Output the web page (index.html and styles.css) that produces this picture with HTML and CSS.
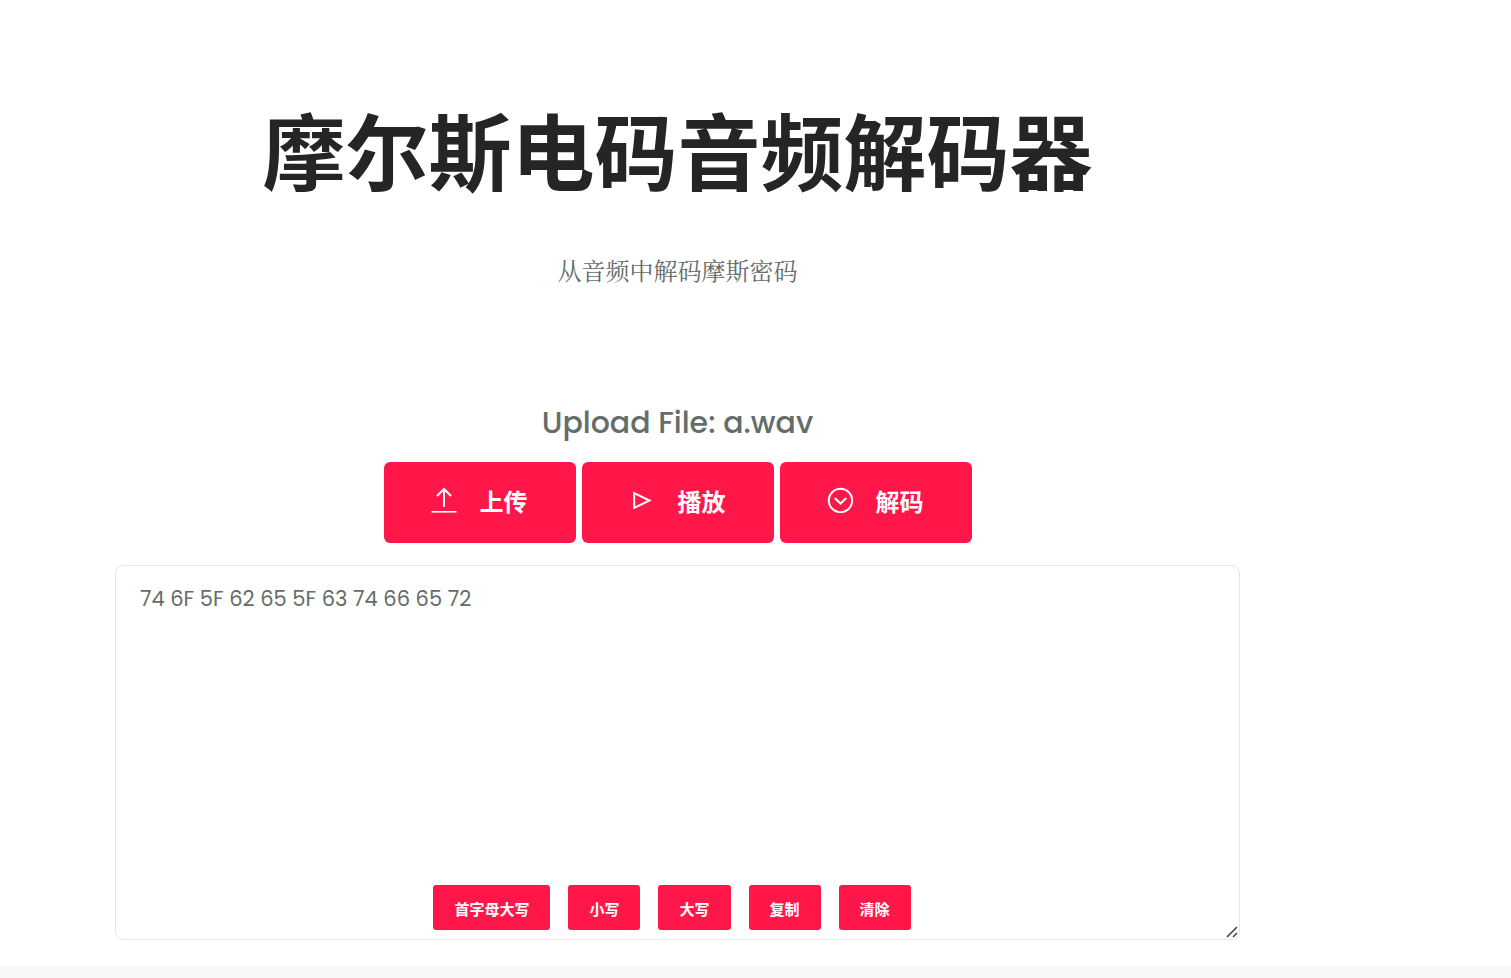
FILE: index.html
```html
<!DOCTYPE html>
<html lang="zh-CN">
<head>
<meta charset="utf-8">
<meta name="viewport" content="width=device-width, initial-scale=1">
<title>摩尔斯电码音频解码器</title>
<link rel="stylesheet" href="styles.css">
</head>
<body>
<main class="decoder">
  <h1 class="title">摩尔斯电码音频解码器</h1>
  <p class="subtitle">从音频中解码摩斯密码</p>
  <h2 class="file-name">Upload File: a.wav</h2>
  <div class="actions">
    <button class="action" type="button">
      <svg class="icon" viewBox="0 0 26 26" aria-hidden="true"><path d="M13 20V2M6 9l7-7 7 7"/><path d="M.5 24.8h25" stroke-width="1.6"/></svg>
      <span>上传</span>
    </button>
    <button class="action" type="button">
      <svg class="icon" viewBox="0 0 26 26" aria-hidden="true"><path d="M5.2 6v15L20.5 13.5z"/></svg>
      <span>播放</span>
    </button>
    <button class="action" type="button">
      <svg class="icon" viewBox="0 0 26 26" aria-hidden="true"><circle cx="13.5" cy="13.5" r="11.7"/><path d="M7.7 11l5.8 5.5 5.8-5.5"/></svg>
      <span>解码</span>
    </button>
  </div>
  <div class="result">
    <textarea class="output" aria-label="解码结果" spellcheck="false">74 6F 5F 62 65 5F 63 74 66 65 72</textarea>
    <svg class="grip" viewBox="0 0 12 12" aria-hidden="true"><path d="M1 11L11 1M7 11l4-4"/></svg>
    <div class="tools">
      <button class="tool" type="button">首字母大写</button>
      <button class="tool" type="button">小写</button>
      <button class="tool" type="button">大写</button>
      <button class="tool" type="button">复制</button>
      <button class="tool" type="button">清除</button>
    </div>
  </div>
</main>
<div class="next-section"></div>
</body>
</html>
```
FILE: styles.css
```css
* {
  box-sizing: border-box;
}

html,
body {
  min-height: 100vh;
}

body {
  display: flex;
  flex-direction: column;
  margin: 0;
  background: #fff;
  color: #636d69;
  font-family: Poppins, Inter, "Noto Sans CJK SC", sans-serif;
}

.decoder {
  display: flex;
  flex-direction: column;
  margin-left: 115px;
  margin-right: 271px;
  padding: 98px 0 26px;
  text-align: center;
}

.title {
  margin: 0;
  color: #252525;
  font: 700 83px/100px "Noto Sans CJK SC", sans-serif;
}

.subtitle {
  margin: 54px 0 0;
  font: 400 24px/36px "Noto Serif CJK SC", "Noto Sans CJK SC", serif;
}

.file-name {
  margin: 112px 0 0;
  font-size: 30px;
  font-weight: 500;
  line-height: 46px;
}

.actions {
  display: flex;
  justify-content: center;
  gap: 6px;
  margin-top: 16px;
}

.action {
  display: flex;
  align-items: center;
  gap: 23px;
  height: 81px;
  padding: 0 48px 4px 47px;
  border: 0;
  border-radius: 6px;
  background: #ff1749;
  color: #fff;
  font: 700 24px/36px "Noto Sans CJK SC", sans-serif;
}

.icon {
  width: 26px;
  height: 26px;
  margin-bottom: 2px;
  fill: none;
  stroke: currentColor;
  stroke-width: 2;
}

.result {
  position: relative;
  margin-top: 22px;
}

.output {
  display: block;
  width: 100%;
  height: 375px;
  padding: 17px 24px;
  border: 1px solid #e6e6e6;
  border-radius: 8px;
  outline: 0;
  background: #fff;
  color: #636d69;
  font: 400 21px/32px Poppins, Inter, sans-serif;
  resize: both;
}

.output::-webkit-resizer {
  background: transparent;
}

.grip {
  position: absolute;
  right: 2px;
  bottom: 2px;
  width: 12px;
  height: 12px;
  fill: none;
  stroke: #444;
  stroke-width: 1.6;
  pointer-events: none;
}

.tools {
  position: absolute;
  right: 11px;
  bottom: 10px;
  left: 0;
  display: flex;
  justify-content: center;
  gap: 18px;
  pointer-events: none;
}

.tool {
  height: 45px;
  padding: 2px 21px 0;
  border: 0;
  border-radius: 3px;
  background: #ff1749;
  color: #fff;
  font: 700 15px/24px "Noto Sans CJK SC", sans-serif;
  pointer-events: auto;
}

.next-section {
  flex: 1;
  background: #f7f7f7;
}
```
